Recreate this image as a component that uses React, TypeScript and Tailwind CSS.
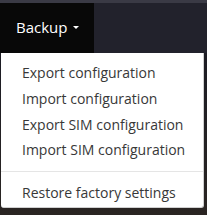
const items = ['Export configuration', 'Import configuration', 'Export SIM configuration', 'Import SIM configuration']

export default function App() {
  return (
    <div className="relative w-[207px] h-[215px] overflow-hidden bg-[#15151b]" style={{ fontFamily: '"Open Sans", sans-serif' }}>
      <div className="h-[3px] bg-[#3a3a45]" />
      <div className="flex h-[50px]">
        <div className="w-[94px] bg-[#080808] flex items-center pl-[16px] pb-[2px] text-white text-[15px]">
          Backup
          <span className="ml-[6px] w-0 h-0 border-l-[3.5px] border-r-[3.5px] border-t-[3.5px] border-l-transparent border-r-transparent border-t-white" />
        </div>
        <div className="flex-1 bg-[#22222c]" />
      </div>
      <div className="h-[162px] bg-gradient-to-b from-[#1c1c24] to-[#2a2522]" />
      <div className="absolute top-[53px] left-[1px] w-[203px] bg-white border-r border-b border-[#d0d0d0] rounded-b-[3px] pt-[7px] pb-[1px] text-[#383838] text-[14px]">
        {items.map((t) => (
          <div key={t} className="h-[25.7px] flex items-center px-[21px] whitespace-nowrap">{t}</div>
        ))}
        <div className="my-[8px] h-px bg-[#e5e5e5]" />
        <div className="h-[26px] flex items-center px-[21px] whitespace-nowrap">Restore factory settings</div>
      </div>
    </div>
  )
}
